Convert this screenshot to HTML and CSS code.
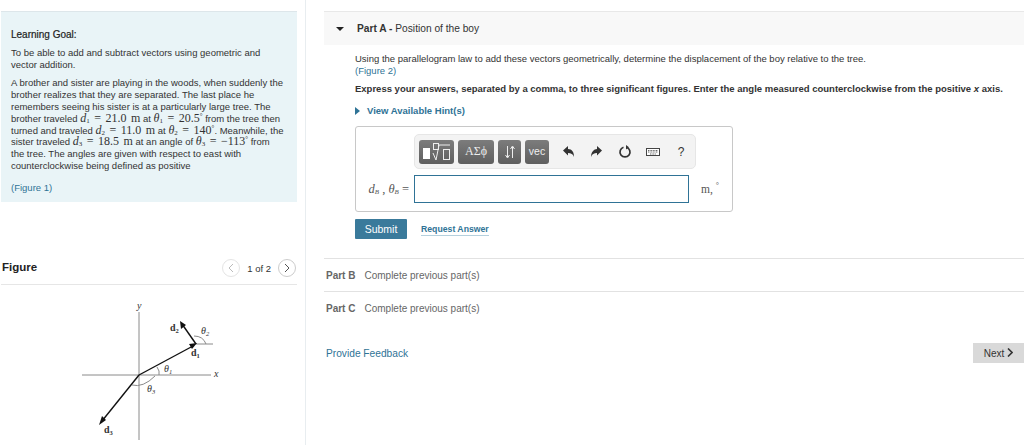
FILE: index.html
```html
<!DOCTYPE html>
<html lang="en">
<head>
    <meta charset="UTF-8">
    <title>Position of the boy</title>
    <link rel="stylesheet" href="styles.css">
</head>
<body>

    <div class="page">
        <div class="left-pane">
            <div class="goal">
                <h4>Learning Goal:</h4>
                <p class="intro">To be able to add and subtract vectors using geometric and<br>vector addition.</p>
                <p class="story">A brother and sister are playing in the woods, when suddenly the<br>
                    brother realizes that they are separated. The last place he<br>
                    remembers seeing his sister is at a particularly large tree. The<br>
                    brother traveled <span class="math"><i>d</i><sub>1</sub> = 21.0 m</span> at <span class="math"><i>θ</i><sub>1</sub> = 20.5<sup>°</sup></span> from the tree then<br>
                    turned and traveled <span class="math"><i>d</i><sub>2</sub> = 11.0 m</span> at <span class="math"><i>θ</i><sub>2</sub> = 140<sup>°</sup></span>. Meanwhile, the<br>
                    sister traveled <span class="math"><i>d</i><sub>3</sub> = 18.5 m</span> at an angle of <span class="math"><i>θ</i><sub>3</sub> = −113<sup>°</sup></span> from<br>
                    the tree. The angles are given with respect to east with<br>
                    counterclockwise being defined as positive</p>
                <p class="figure-link"><a href="#">(Figure 1)</a></p>
            </div>

            <div class="figure-head">
                <h3>Figure</h3>
                <div class="pager">
                    <span class="circle off">
                        <svg width="6" height="10" viewBox="0 0 6 10"><path d="M5 1 1 5l4 4" fill="none" stroke="#bbb" stroke-width="1"/></svg>
                    </span>
                    <span class="count">1 of 2</span>
                    <span class="circle">
                        <svg width="6" height="10" viewBox="0 0 6 10"><path d="M1 1l4 4-4 4" fill="none" stroke="#555" stroke-width="1"/></svg>
                    </span>
                </div>
            </div>

            <svg class="diagram" width="160" height="145" viewBox="70 295 160 145">
                <g stroke="#8a8a8a" stroke-width="1" fill="none">
                    <path d="M82 375H211"/>
                    <path d="M139 312V440"/>
                    <path d="M196 344H213"/>
                    <path d="M157 367q3 4 2 8"/>
                    <path d="M132 385q11 3 23-9"/>
                    <path d="M194 336q9 0 12 8"/>
                </g>
                <g stroke="#111" stroke-width="1.4" fill="#111">
                    <path d="M139 375 193 346"/>
                    <path d="M196 344 182 324"/>
                    <path d="M139 375 102 421"/>
                </g>
                <g fill="#111">
                    <path d="M197 343 189 344 192 349Z"/>
                    <path d="M180 321 181 329 186 325Z"/>
                    <path d="M99 425 106 420 102 416Z"/>
                </g>
                <g class="fig-text">
                    <text x="137" y="309" font-style="italic">y</text>
                    <text x="214" y="377" font-style="italic">x</text>
                    <text x="170" y="331" font-weight="bold">d<tspan class="fig-sub" dy="2">2</tspan></text>
                    <text x="191" y="356" font-weight="bold">d<tspan class="fig-sub" dy="2">1</tspan></text>
                    <text x="104" y="433" font-weight="bold">d<tspan class="fig-sub" dy="2">3</tspan></text>
                    <text x="201" y="334" font-style="italic">θ<tspan class="fig-sub" dy="2">2</tspan></text>
                    <text x="164" y="372" font-style="italic">θ<tspan class="fig-sub" dy="2">1</tspan></text>
                    <text x="147" y="392" font-style="italic">θ<tspan class="fig-sub" dy="2">3</tspan></text>
                </g>
            </svg>
        </div>

        <div class="right-pane">
            <div class="part-head">
                <span class="caret-down"></span>
                <span><b>Part A -</b> Position of the boy</span>
            </div>

            <div class="part-body">
                <p class="question">Using the parallelogram law to add these vectors geometrically, determine the displacement of the boy relative to the tree.<br><a href="#">(Figure 2)</a></p>
                <p class="express">Express your answers, separated by a comma, to three significant figures. Enter the angle measured counterclockwise from the positive <i>x</i> axis.</p>
                <p class="hints"><span class="caret-right"></span><a href="#">View Available Hint(s)</a></p>

                <div class="answer-box">
                    <div class="toolbar-row">
                        <div class="toolbar">
                            <span class="tool tool-root">
                                <svg width="28" height="20" viewBox="0 0 28 20">
                                    <rect x="0" y="6" width="7" height="11" fill="#fff"/>
                                    <g fill="none" stroke="#eee" stroke-width="1">
                                        <rect x="10.5" y="1.5" width="5" height="6"/>
                                        <path d="M10 11l3 7 3-15h11"/>
                                        <rect x="20.5" y="7.5" width="6" height="10"/>
                                    </g>
                                </svg>
                            </span>
                            <span class="tool tool-greek">ΑΣϕ</span>
                            <span class="tool tool-arrows">
                                <svg width="12" height="14" viewBox="0 0 12 14">
                                    <path d="M3.5 1v11M1.500 10l2 3 2-3M8.500 13V2M6.500 4l2-3 2 3" fill="none" stroke="#eee" stroke-width="1"/>
                                </svg>
                            </span>
                            <span class="tool tool-vec">vec</span>
                            <span class="action">
                                <svg width="12" height="12" viewBox="0 0 12 12"><path d="M0 4.500 5 0v3c4 0 6 3 6 8-1-3-3-4-6-4v2.500Z" fill="#333"/></svg>
                            </span>
                            <span class="action">
                                <svg width="12" height="12" viewBox="0 0 12 12"><path d="M11 4.500 6 0v3c-3 0-6 3-6 8 1-3 3-4 6-4v2.500Z" fill="#333"/></svg>
                            </span>
                            <span class="action">
                                <svg width="14" height="14" viewBox="0 0 14 14"><path d="M5.500 2.200a5 5 0 1 0 3 0" fill="none" stroke="#333" stroke-width="1.700"/><path d="M8 0v4.500l3-2.200Z" fill="#333"/></svg>
                            </span>
                            <span class="action">
                                <svg width="14" height="8" viewBox="0 0 14 8"><rect x=".5" y=".5" width="13" height="7" fill="#fff" stroke="#444"/><path d="M2 2.500h10M2 4h10M4 6h6" stroke="#666" stroke-width="1" stroke-dasharray="1 .6"/></svg>
                            </span>
                            <span class="action help">?</span>
                        </div>
                    </div>
                    <div class="input-row">
                        <span class="input-label"><i>d<sub>B</sub></i> , <i>θ<sub>B</sub></i> =</span>
                        <div class="answer-input"></div>
                        <span class="units">m, <sup>°</sup></span>
                    </div>
                </div>

                <div class="actions">
                    <button class="submit">Submit</button>
                    <a href="#" class="request">Request Answer</a>
                </div>
            </div>

            <div class="part-row"><b>Part B</b><span>Complete previous part(s)</span></div>
            <div class="part-row"><b>Part C</b><span>Complete previous part(s)</span></div>

            <div class="foot">
                <a href="#">Provide Feedback</a>
                <button class="next">Next
                    <svg width="6" height="9" viewBox="0 0 6 9"><path d="M1 .5l4 4-4 4" fill="none" stroke="#333" stroke-width="1.600"/></svg>
                </button>
            </div>
        </div>
    </div>

</body>
</html>
```
FILE: styles.css
```css
html, body {
    margin: 0;
    padding: 0;
    height: 445px;
    overflow: hidden;
}
body {
    font-family: "Liberation Sans", Arial, sans-serif;
    font-size: 9.5px;
    color: #333;
    background-color: #fff;
}
a {
    color: #2f7396;
    text-decoration: none;
}
p {
    margin: 0;
}
.page {
    display: flex;
    height: 445px;
}

/* left side */
.left-pane {
    width: 306px;
    height: 445px;
    box-sizing: border-box;
    padding: 11px 8px 0 1px;
    border-right: 1px solid #e8edf0;
}
.goal {
    height: 191px;
    box-sizing: border-box;
    padding: 17px 10px 0 10px;
    background-color: #e9f4f7;
    border-top: 1px solid #dde6ea;
    line-height: 11.8px;
}
.goal h4 {
    margin: 0 0 6px 0;
    font-size: 10px;
    font-weight: normal;
    color: #222;
    -webkit-text-stroke: 0.2px #222;
}
.intro {
    margin-bottom: 7px;
}
.figure-link {
    margin-top: 10px;
}
.math {
    font-family: "Liberation Serif", serif;
    font-size: 12px;
    line-height: 0;
    word-spacing: 1.5px;
}
.math sub, .input-label sub {
    font-size: 7px;
    line-height: 0;
    vertical-align: -1px;
}
.math sup {
    font-size: 7px;
    line-height: 0;
    vertical-align: 4px;
}
.figure-head {
    display: flex;
    justify-content: space-between;
    align-items: center;
    height: 29px;
    margin-top: 53px;
    padding-left: 1px;
    border-bottom: 1px solid #e6e6e6;
}
.figure-head h3 {
    margin: 0 0 5px 0;
    font-size: 11.500px;
    color: #222;
}
.pager {
    display: flex;
    align-items: center;
    gap: 7px;
    margin: 0 1px 3px 0;
}
.count {
    font-size: 9.500px;
}
.circle {
    display: flex;
    align-items: center;
    justify-content: center;
    width: 18px;
    height: 18px;
    box-sizing: border-box;
    border: 1px solid #ccc;
    border-radius: 50%;
}
.circle.off {
    border-color: #e4e4e4;
}
.diagram {
    display: block;
    margin: 10px 0 0 69px;
}
.fig-text {
    font-family: "Liberation Serif", serif;
    font-size: 10px;
    fill: #333;
}
.fig-sub {
    font-size: 6.500px;
}

/* right side */
.right-pane {
    flex: 1;
    padding: 11px 0 0 18px;
    min-width: 0;
}
.part-head {
    display: flex;
    align-items: center;
    gap: 13px;
    height: 34px;
    box-sizing: border-box;
    padding-left: 12px;
    background-color: #f8f8f8;
    border-top: 1px solid #e8e8e8;
    font-size: 10.200px;
}
.part-head b, .part-row b {
    color: #333;
}
.caret-down {
    width: 0;
    height: 0;
    border-left: 4px solid transparent;
    border-right: 4px solid transparent;
    border-top: 4.500px solid #222;
}
.part-body {
    padding: 8px 0 0 31px;
    height: 213px;
    box-sizing: border-box;
}
.question {
    font-size: 9.500px;
    line-height: 11.500px;
}
.express {
    margin-top: 7px;
    font-size: 9.500px;
    font-weight: bold;
    line-height: 12px;
}
.hints {
    display: flex;
    align-items: center;
    gap: 7px;
    margin-top: 10px;
    font-size: 9.500px;
    font-weight: bold;
    line-height: 12px;
}
.caret-right {
    width: 0;
    height: 0;
    border-top: 4px solid transparent;
    border-bottom: 4px solid transparent;
    border-left: 5px solid #2f7396;
}
.answer-box {
    width: 378px;
    height: 86px;
    box-sizing: border-box;
    margin-top: 9px;
    border: 1px solid #c8c8c8;
    border-radius: 3px;
}
.toolbar-row {
    padding: 7px 0 0 58px;
}
.toolbar {
    display: flex;
    align-items: center;
    width: 282px;
    height: 35px;
    box-sizing: border-box;
    padding-left: 4px;
    background-color: #f3f3f3;
    border: 1px solid #e6e6e6;
    border-radius: 5px;
}
.tool {
    display: flex;
    align-items: center;
    justify-content: center;
    height: 24px;
    margin-right: 4px;
    background: linear-gradient(#7c7c7c, #5f5f5f);
    border-radius: 3px;
    color: #eee;
}
.tool-root { width: 35px; }
.tool-greek {
    width: 36px;
    font-family: "Liberation Serif", serif;
    font-size: 12px;
}
.tool-arrows { width: 23px; }
.tool-vec {
    width: 24px;
    font-size: 10.500px;
    padding-bottom: 2px;
    box-sizing: border-box;
}
.action {
    display: flex;
    align-items: center;
    justify-content: center;
    width: 28px;
    color: #333;
}
.action:nth-child(5) {
    margin-left: 2px;
}
.help {
    font-size: 12px;
}
.input-row {
    display: flex;
    align-items: center;
    margin-top: 6px;
}
.input-label {
    width: 58px;
    box-sizing: border-box;
    padding-right: 5px;
    text-align: right;
    font-family: "Liberation Serif", serif;
    font-size: 12.500px;
    color: #555;
    white-space: nowrap;
}
.answer-input {
    width: 275px;
    height: 28px;
    box-sizing: border-box;
    border: 1px solid #2f7396;
}
.units {
    margin-left: 12px;
    font-family: "Liberation Serif", serif;
    font-size: 11.500px;
    color: #555;
}
.units sup {
    font-size: 8px;
    line-height: 0;
}
.actions {
    display: flex;
    align-items: center;
    gap: 14px;
    margin-top: 7px;
}
.submit {
    width: 52px;
    height: 20px;
    padding: 0;
    background-color: #3a7a9b;
    border: none;
    border-radius: 1px;
    color: #fff;
    font-family: "Liberation Sans", Arial, sans-serif;
    font-size: 10.500px;
}
.request {
    font-size: 8.700px;
    font-weight: bold;
    border-bottom: 1px solid #b5d0dd;
    line-height: 11px;
    margin-top: 1px;
}
.part-row {
    display: flex;
    align-items: center;
    gap: 9px;
    height: 33px;
    box-sizing: border-box;
    padding-left: 2px;
    border-top: 1px solid #e2e2e2;
    font-size: 10px;
    color: #666;
}
.part-row b {
    color: #666;
}
.foot {
    display: flex;
    justify-content: space-between;
    align-items: center;
    margin-top: 19px;
    padding-left: 2px;
    font-size: 10.200px;
}
.next {
    width: 51px;
    height: 20px;
    padding: 0;
    background-color: #d9d9d9;
    border: none;
    color: #333;
    font-family: "Liberation Sans", Arial, sans-serif;
    font-size: 10px;
}
```
